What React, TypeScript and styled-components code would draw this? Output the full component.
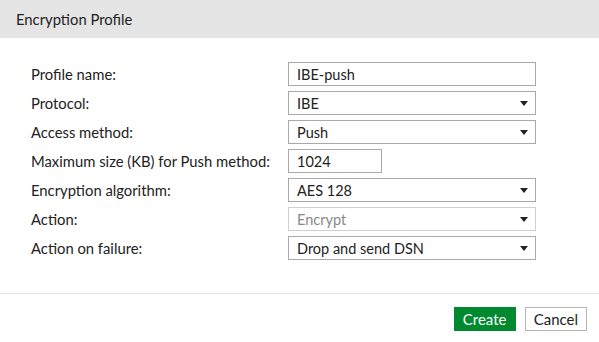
import React from "react";
import styled, { createGlobalStyle } from "styled-components";

const GlobalStyle = createGlobalStyle`
  html, body {
    margin: 0;
    padding: 0;
    background: #fff;
    font-family: Lato, "Liberation Sans", sans-serif;
    color: #222;
  }
`;

const Dialog = styled.div`
  width: 599px;
  height: 342px;
  display: flex;
  flex-direction: column;
  background: #fff;
`;

const Header = styled.div`
  height: 38px;
  display: flex;
  align-items: center;
  padding: 0 16px;
  background: #e5e5e5;
  font-size: 14.8px;
  color: #222;
`;

const Body = styled.div`
  flex: 1;
  padding: 24px 0 0 31px;
`;

const Form = styled.div`
  display: grid;
  grid-template-columns: 257px 248px;
  grid-auto-rows: 24px;
  row-gap: 5px;
  align-items: center;
`;

const Label = styled.div`
  font-size: 14.8px;
  color: #222;
`;

const Field = styled.div<{ $width?: number; $disabled?: boolean }>`
  box-sizing: border-box;
  width: ${(p) => (p.$width ? `${p.$width}px` : "100%")};
  height: 24px;
  display: flex;
  align-items: center;
  justify-content: space-between;
  padding: 0 7px 0 8px;
  border: 1px solid ${(p) => (p.$disabled ? "#d0d0d0" : "#a9a9a9")};
  font-size: 14.5px;
  color: ${(p) => (p.$disabled ? "#888" : "#222")};
`;

const Arrow = styled.span`
  width: 0;
  height: 0;
  border-left: 4.5px solid transparent;
  border-right: 4.5px solid transparent;
  border-top: 5px solid #222;
`;

const Footer = styled.div`
  height: 49px;
  border-top: 1px solid #e2e2e2;
  display: flex;
  justify-content: flex-end;
  align-items: flex-start;
  padding: 13px 12px 0 0;
  gap: 9px;
  box-sizing: border-box;
`;

const Button = styled.button<{ $primary?: boolean }>`
  height: 24px;
  padding: 0 8px;
  min-width: 62px;
  font-family: Lato, "Liberation Sans", sans-serif;
  font-size: 15px;
  border: 1px solid ${(p) => (p.$primary ? "#00892f" : "#b5b5b5")};
  background: ${(p) => (p.$primary ? "#00892f" : "#fff")};
  color: ${(p) => (p.$primary ? "#fff" : "#222")};
  border-radius: 0;
`;

type Row = {
  label: string;
  value: string;
  select?: boolean;
  disabled?: boolean;
  width?: number;
};

const rows: Row[] = [
  { label: "Profile name:", value: "IBE-push" },
  { label: "Protocol:", value: "IBE", select: true },
  { label: "Access method:", value: "Push", select: true },
  { label: "Maximum size (KB) for Push method:", value: "1024", width: 94 },
  { label: "Encryption algorithm:", value: "AES 128", select: true },
  { label: "Action:", value: "Encrypt", select: true, disabled: true },
  { label: "Action on failure:", value: "Drop and send DSN", select: true },
];

export default function App() {
  return (
    <Dialog>
      <GlobalStyle />
      <Header>Encryption Profile</Header>
      <Body>
        <Form>
          {rows.map((r) => (
            <React.Fragment key={r.label}>
              <Label>{r.label}</Label>
              <Field $width={r.width} $disabled={r.disabled}>
                <span>{r.value}</span>
                {r.select && <Arrow />}
              </Field>
            </React.Fragment>
          ))}
        </Form>
      </Body>
      <Footer>
        <Button $primary>Create</Button>
        <Button>Cancel</Button>
      </Footer>
    </Dialog>
  );
}
